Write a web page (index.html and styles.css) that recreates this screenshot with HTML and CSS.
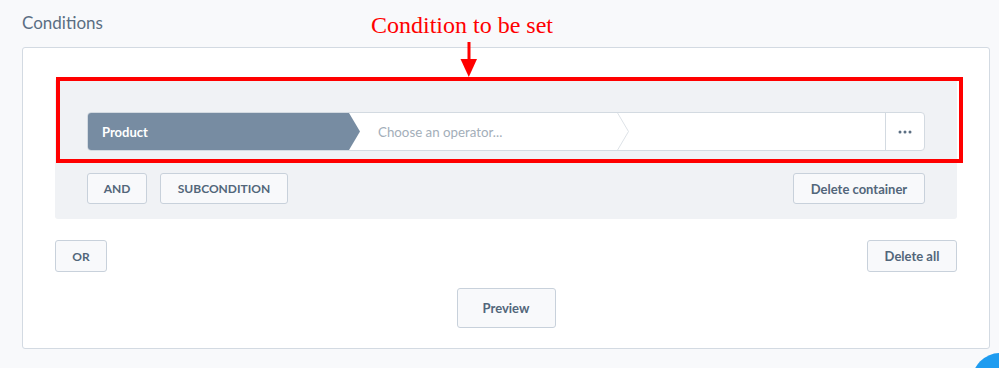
FILE: index.html
```html
<!DOCTYPE html>
<html>
<head>
<meta charset="utf-8">
<link rel="stylesheet" href="styles.css">
</head>
<body>
<div class="page">
  <h2 class="heading">Conditions</h2>
  <div class="card">
    <div class="container">
      <div class="cond-row">
        <div class="seg seg-field">Product</div>
        <div class="seg seg-op">Choose an operator...</div>
        <svg class="chev" width="12" height="37" viewBox="0 0 12 37"><polyline points="0,-1 11.5,18.5 0,38" fill="none" stroke="#dde2e7" stroke-width="1"/></svg>
        <div class="seg seg-value"></div>
        <div class="more"><svg width="14" height="4" viewBox="0 0 14 4"><circle cx="2" cy="2" r="1.5" fill="#5b6e82"/><circle cx="7" cy="2" r="1.5" fill="#5b6e82"/><circle cx="12" cy="2" r="1.5" fill="#5b6e82"/></svg></div>
      </div>
      <div class="btn-row">
        <div class="btn-group">
          <button class="btn btn-sm btn-and">AND</button>
          <button class="btn btn-sm btn-sub">SUBCONDITION</button>
        </div>
        <button class="btn btn-sm btn-delc">Delete container</button>
      </div>
    </div>
    <div class="btn-row outer-row">
      <button class="btn btn-md btn-or">OR</button>
      <button class="btn btn-md btn-dela">Delete all</button>
    </div>
    <div class="preview-row">
      <button class="btn btn-lg btn-preview">Preview</button>
    </div>
  </div>

  <div class="note-text">Condition to be set</div>
  <svg class="note-arrow" width="18" height="36" viewBox="0 0 18 36"><rect x="7.5" y="0" width="3" height="19" fill="#ff0000"/><polygon points="0.5,17 17,17 8.8,35" fill="#ff0000"/></svg>
  <div class="note-box"></div>
  <div class="fab"></div>
</div>
</body>
</html>
```

FILE: styles.css
```css
html, body {
  margin: 0;
  padding: 0;
  height: 368px;
  overflow: hidden;
  background: #f8f9fb;
}

.page {
  position: relative;
  height: 368px;
  overflow: hidden;
  padding: 13px 9px 0 22px;
  box-sizing: border-box;
  font-family: Lato, "Liberation Sans", sans-serif;
  color: #52667a;
}

.heading {
  margin: 0;
  font-size: 17px;
  line-height: 20px;
  font-weight: 400;
  color: #5a6e83;
}

.card {
  margin-top: 14px;
  background: #ffffff;
  border: 1px solid #d3dae2;
  border-radius: 3px;
  padding: 31px 32px 20px 32px;
}

.container {
  background: #f0f2f5;
  border-radius: 3px;
  padding: 33px 32px 15px 32px;
}

.cond-row {
  display: flex;
  height: 39px;
  box-sizing: border-box;
  border: 1px solid #d3dae1;
  border-radius: 4px;
  background: #ffffff;
  overflow: hidden;
}

.seg {
  display: flex;
  align-items: center;
  font-size: 13px;
}

.seg-field {
  flex: 0 0 272px;
  padding-left: 14px;
  box-sizing: border-box;
  background: #778ca2;
  color: #ffffff;
  font-weight: 700;
  clip-path: polygon(0 0, calc(100% - 11px) 0, 100% 50%, calc(100% - 11px) 100%, 0 100%);
}

.seg-op {
  flex: 0 0 257px;
  padding-left: 18px;
  box-sizing: border-box;
  color: #a3aeb9;
  font-size: 13.3px;
}

.chev {
  flex: 0 0 12px;
  display: block;
}

.seg-value {
  flex: 1;
}

.more {
  flex: 0 0 38px;
  border-left: 1px solid #d3dae1;
  display: flex;
  align-items: center;
  justify-content: center;
}

.btn-row {
  display: flex;
  justify-content: space-between;
  align-items: center;
  margin-top: 22px;
}

.btn-group {
  display: flex;
  gap: 13px;
}

.btn {
  font-family: Lato, "Liberation Sans", sans-serif;
  font-weight: 700;
  color: #52667a;
  background: #f8f9fb;
  border: 1px solid #c8d1db;
  border-radius: 3px;
  padding: 0;
  box-sizing: border-box;
  font-size: 12px;
}

.btn-sm { height: 31px; }
.btn-md { height: 32px; }
.btn-lg { height: 40px; }

.btn-and { width: 60px; }
.btn-sub { width: 128px; }
.btn-delc { width: 132px; font-size: 13px; }

.outer-row {
  margin-top: 21px;
}

.btn-or { width: 52px; }
.btn-dela { width: 90px; font-size: 13px; }

.preview-row {
  display: flex;
  justify-content: center;
  margin-top: 16px;
}

.btn-preview {
  width: 99px;
  font-size: 13px;
}

.note-text {
  position: absolute;
  left: 371px;
  top: 13px;
  font-family: "Liberation Serif", serif;
  font-size: 24px;
  line-height: 24px;
  color: #ff0000;
  white-space: nowrap;
}

.note-arrow {
  position: absolute;
  left: 460px;
  top: 42px;
}

.note-box {
  position: absolute;
  left: 56px;
  top: 77px;
  width: 907px;
  height: 86px;
  box-sizing: border-box;
  border: 4px solid #ff0000;
}

.fab {
  position: absolute;
  left: 972px;
  top: 353px;
  width: 56px;
  height: 56px;
  border-radius: 50%;
  background: #1e9cf0;
}
```
